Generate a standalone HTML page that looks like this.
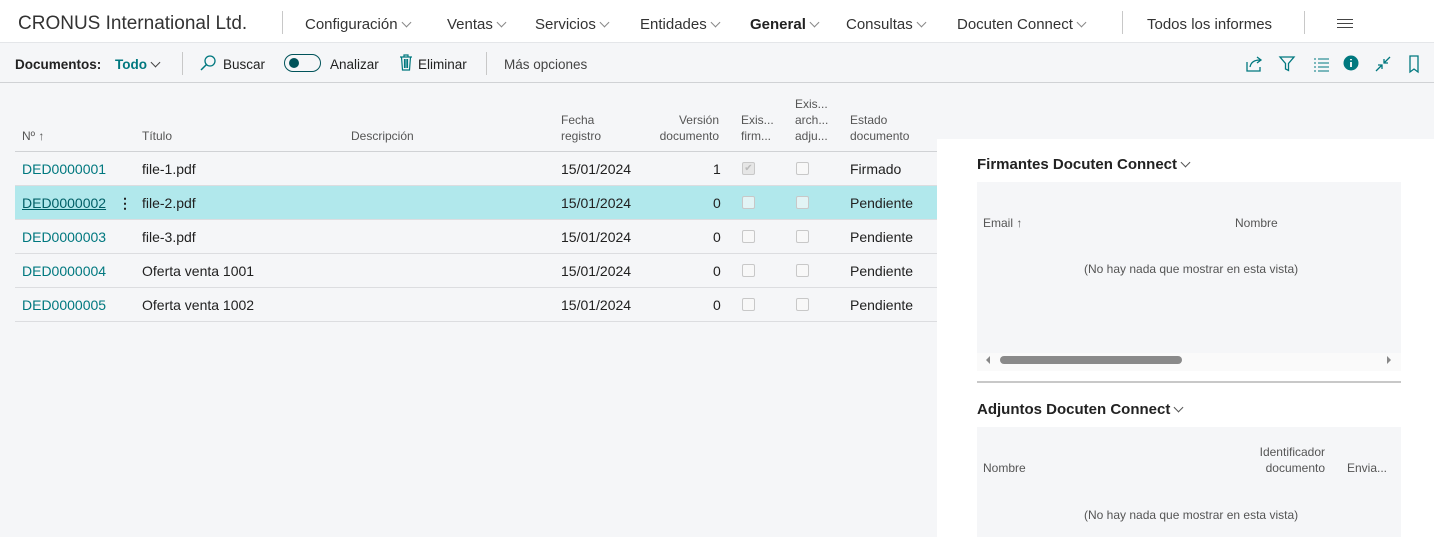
<!DOCTYPE html>
<html><head><meta charset="utf-8"><style>
*{margin:0;padding:0;box-sizing:border-box}
body{width:1434px;height:537px;overflow:hidden;background:#f5f6f8;font-family:"Liberation Sans",sans-serif;color:#212121;position:relative}
.a{position:absolute;white-space:nowrap}
.top{position:absolute;left:0;top:0;width:1434px;height:43px;background:#fff;border-bottom:1px solid #e4e6e9}
.nav{font-size:15px;color:#333;top:16px}
.chev{display:inline-block;width:7px;height:7px;border-right:1px solid #888;border-bottom:1px solid #888;transform:rotate(45deg);margin-left:5px;position:relative;top:-3px}
.tb{font-size:13.5px;top:57px;color:#222}
.h{font-size:12px;color:#555;line-height:16px}
.row{position:absolute;left:15px;width:922px;height:34px;border-bottom:1px solid #dcdde0}
.c{position:absolute;top:9px;font-size:14px;white-space:nowrap}
.lnk{color:#00787f}
.cb{position:absolute;top:10px;width:13px;height:13px;border:1px solid #c8c8c8;border-radius:2px;background:#f8f8f8}
.sep{position:absolute;width:1px;background:#c8c8c8}
</style></head><body>
<div class="top"></div>
<div class="a" style="left:18px;top:13px;font-size:19px;color:#333">CRONUS International Ltd.</div>
<div class="sep" style="left:282px;top:11px;height:23px"></div>
<div class="a nav" style="left:305px">Configuración<span class="chev"></span></div>
<div class="a nav" style="left:447px">Ventas<span class="chev"></span></div>
<div class="a nav" style="left:535px">Servicios<span class="chev"></span></div>
<div class="a nav" style="left:640px">Entidades<span class="chev"></span></div>
<div class="a nav" style="left:750px;font-weight:bold;color:#222">General<span class="chev"></span></div>
<div class="a nav" style="left:846px">Consultas<span class="chev"></span></div>
<div class="a nav" style="left:957px">Docuten Connect<span class="chev"></span></div>
<div class="sep" style="left:1122px;top:11px;height:23px"></div>
<div class="a nav" style="left:1147px">Todos los informes</div>
<div class="sep" style="left:1304px;top:11px;height:23px"></div>
<div class="a" style="left:1337px;top:19px;width:16px;height:1px;background:#444;box-shadow:0 4px #444,0 8px #444"></div>

<div class="a tb" style="left:15px;font-weight:bold">Documentos:</div>
<div class="a tb" style="left:115px;font-weight:bold;color:#00787f">Todo<span class="chev" style="border-color:#444"></span></div>
<div class="sep" style="left:182px;top:52px;height:23px"></div>
<svg class="a" style="left:199px;top:54px" width="18" height="18" viewBox="0 0 18 18"><circle cx="11" cy="7" r="5" fill="none" stroke="#00787f" stroke-width="1.3"/><path d="M7.5 10.5L2 16" stroke="#00787f" stroke-width="1.5"/></svg>
<div class="a tb" style="left:223px">Buscar</div>
<div class="a" style="left:284px;top:54px;width:37px;height:18px;border:1.5px solid #00535a;border-radius:9px"><div style="position:absolute;left:4px;top:3px;width:10px;height:10px;border-radius:50%;background:#00535a"></div></div>
<div class="a tb" style="left:330px">Analizar</div>
<svg class="a" style="left:399px;top:54px" width="14" height="17" viewBox="0 0 14 17"><path d="M1 3h12M5 3V1h4v2M2.5 3l1 13h7l1-13M5.5 5v9M7 5v9M8.5 5v9" fill="none" stroke="#00787f" stroke-width="1.2"/></svg>
<div class="a tb" style="left:418px">Eliminar</div>
<div class="sep" style="left:486px;top:52px;height:23px"></div>
<div class="a tb" style="left:504px;color:#444">Más opciones</div>
<svg class="a" style="left:1244px;top:54px" width="190" height="20" viewBox="0 0 190 20" fill="none" stroke="#00787f" stroke-width="1.3">
<path d="M3 8v9h13v-4M6 13c1-5 5-7 10-7M13 3l4 3-4 3"/>
<path d="M36 3h14l-5.5 6.5v7l-3-1.5v-5.5z"/>
<path d="M70 5h2M70 9h2M70 13h2M70 17h2M74 5h11M74 9h11M74 13h11M74 17h11" stroke-width="1.1"/>
<circle cx="107" cy="9" r="7.5" fill="#00787f" stroke="none"/><path d="M107 8v5M107 5v1.2" stroke="#fff" stroke-width="1.8"/>
<path d="M132 17l6-6M134 11h4v4M146 3l-6 6M140 5v4h4"/>
<path d="M166 2h8v16l-4-3-4 3z"/>
</svg>
<div class="a" style="left:0;top:82px;width:1434px;height:1px;background:#d0d2d5"></div>

<div class="a h" style="left:22px;top:128px">Nº ↑</div>
<div class="a h" style="left:142px;top:128px">Título</div>
<div class="a h" style="left:351px;top:128px">Descripción</div>
<div class="a h" style="left:561px;top:112px">Fecha<br>registro</div>
<div class="a h" style="left:656px;top:112px;text-align:right;width:63px">Versión<br>documento</div>
<div class="a h" style="left:741px;top:112px">Exis...<br>firm...</div>
<div class="a h" style="left:795px;top:96px">Exis...<br>arch...<br>adju...</div>
<div class="a h" style="left:850px;top:112px">Estado<br>documento</div>
<div class="a" style="left:15px;top:151px;width:922px;height:1px;background:#d0d2d5"></div>

<div class="row" style="top:152px"><span class="c lnk" style="left:7px">DED0000001</span><span class="c" style="left:127px">file-1.pdf</span><span class="c" style="left:546px">15/01/2024</span><span class="c" style="left:698px">1</span><span class="cb" style="left:727px;background:#e6e6e6;color:#bbb;font-size:10px;line-height:11px;text-align:center">✔</span><span class="cb" style="left:781px"></span><span class="c" style="left:835px">Firmado</span></div>
<div class="row" style="top:186px;background:#b1e8ec"><span class="c lnk" style="left:7px;text-decoration:underline;color:#005f66">DED0000002</span><span class="c" style="left:103px;font-weight:bold">⋮</span><span class="c" style="left:127px">file-2.pdf</span><span class="c" style="left:546px">15/01/2024</span><span class="c" style="left:698px">0</span><span class="cb" style="left:727px;background:#e2f4f5"></span><span class="cb" style="left:781px;background:#e2f4f5"></span><span class="c" style="left:835px">Pendiente</span></div>
<div class="row" style="top:220px"><span class="c lnk" style="left:7px">DED0000003</span><span class="c" style="left:127px">file-3.pdf</span><span class="c" style="left:546px">15/01/2024</span><span class="c" style="left:698px">0</span><span class="cb" style="left:727px"></span><span class="cb" style="left:781px"></span><span class="c" style="left:835px">Pendiente</span></div>
<div class="row" style="top:254px"><span class="c lnk" style="left:7px">DED0000004</span><span class="c" style="left:127px">Oferta venta 1001</span><span class="c" style="left:546px">15/01/2024</span><span class="c" style="left:698px">0</span><span class="cb" style="left:727px"></span><span class="cb" style="left:781px"></span><span class="c" style="left:835px">Pendiente</span></div>
<div class="row" style="top:288px"><span class="c lnk" style="left:7px">DED0000005</span><span class="c" style="left:127px">Oferta venta 1002</span><span class="c" style="left:546px">15/01/2024</span><span class="c" style="left:698px">0</span><span class="cb" style="left:727px"></span><span class="cb" style="left:781px"></span><span class="c" style="left:835px">Pendiente</span></div>

<div class="a" style="left:937px;top:139px;width:497px;height:398px;background:#fff"></div>
<div class="a" style="left:977px;top:156px;font-size:15px;font-weight:bold;color:#222">Firmantes Docuten Connect<span class="chev" style="border-color:#555"></span></div>
<div class="a" style="left:977px;top:182px;width:424px;height:189px;background:#f5f6f8"></div>
<div class="a h" style="left:983px;top:215px">Email ↑</div>
<div class="a h" style="left:1235px;top:215px">Nombre</div>
<div class="a h" style="left:1084px;top:261px">(No hay nada que mostrar en esta vista)</div>
<div class="a" style="left:977px;top:353px;width:424px;height:18px;background:#fafafa"></div>
<div class="a" style="left:986px;top:356px;width:0;height:0;border:4px solid transparent;border-right-color:#888;border-left:0"></div>
<div class="a" style="left:1000px;top:356px;width:182px;height:8px;border-radius:4px;background:#8a8a8a"></div>
<div class="a" style="left:1387px;top:356px;width:0;height:0;border:4px solid transparent;border-left-color:#888;border-right:0"></div>
<div class="a" style="left:977px;top:381px;width:424px;height:2px;background:#c8c8c8"></div>
<div class="a" style="left:977px;top:401px;font-size:15px;font-weight:bold;color:#222">Adjuntos Docuten Connect<span class="chev" style="border-color:#555"></span></div>
<div class="a" style="left:977px;top:427px;width:424px;height:110px;background:#f5f6f8"></div>
<div class="a h" style="left:983px;top:460px">Nombre</div>
<div class="a h" style="left:1250px;top:444px;text-align:right;width:75px">Identificador<br>documento</div>
<div class="a h" style="left:1347px;top:460px">Envia...</div>
<div class="a h" style="left:1084px;top:507px">(No hay nada que mostrar en esta vista)</div>
</body></html>
